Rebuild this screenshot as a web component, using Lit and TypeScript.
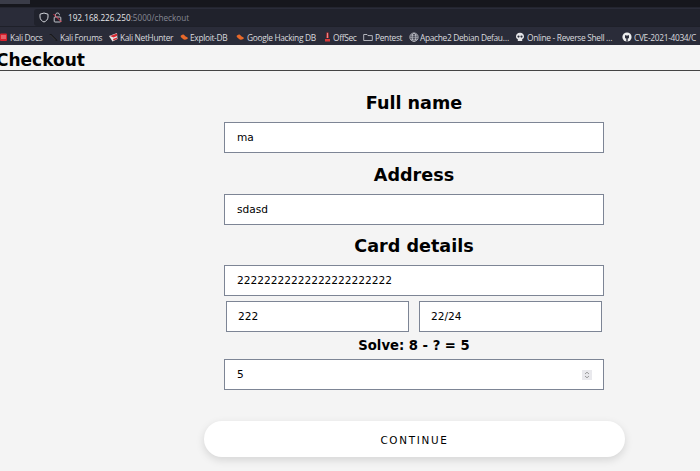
import { LitElement, html, css, svg } from "lit";
import { customElement } from "lit/decorators.js";

const icons: Record<string, unknown> = {
  docs: svg`<rect x="0" y="1.5" width="7" height="7.5" rx="1" fill="#d8202c"/><path d="M1 4h5M1 6h5" stroke="#f4c8c8" stroke-width=".8"/>`,
  forums: svg`<path d="M0 2 L2 2 L8.5 8.5 L7 9 L3 5 Z" fill="#0b0b0d"/><path d="M1 2.5 L7 8.5" stroke="#777" stroke-width=".5"/>`,
  hunter: svg`<path d="M0 4 L8 1 L8.5 7 L3.5 9.5 Z" fill="#e6e6e6"/><path d="M1 4 L8 1.4 L8 4 L4.5 5.4Z" fill="#d62a33"/><path d="M4 7 L8 5.4 L8 7 L4.5 8.6Z" fill="#d62a33"/>`,
  exploit: svg`<path d="M.5 4 C2 2 4 2 5 4 C6 5 7.5 5 8 6 C7 8 4 8 3 7 C2 6 1 5.5 .5 4Z" fill="#e8692a"/>`,
  offsec: svg`<path d="M3.5 0.5 L5.5 0.5 L5.8 6 L3.2 6 Z" fill="#cf2e2e"/><path d="M2 7 H7 V9.5 H2Z" fill="#d83a3a"/><path d="M4.5 1 V6" stroke="#f5c6c6" stroke-width=".6"/>`,
  folder: svg`<path d="M.7 2.5 H4 L5 3.6 H9.3 V8.5 H.7 Z" fill="none" stroke="#d4d6dc" stroke-width=".8"/>`,
  globe: svg`<g fill="none" stroke="#d4d6dc" stroke-width=".7"><circle cx="5" cy="5.2" r="4.2"/><ellipse cx="5" cy="5.2" rx="1.9" ry="4.2"/><path d="M1 5.2H9M1.5 3.2H8.5M1.5 7.2H8.5"/></g>`,
  skull: svg`<path d="M5 .8 C2.2 .8 1 2.6 1 4.6 C1 6 1.8 6.8 2.8 7.2 V9 H7.2 V7.2 C8.2 6.8 9 6 9 4.6 C9 2.6 7.8 .8 5 .8Z" fill="#e4e5e8"/><circle cx="3.5" cy="4.6" r="1.1" fill="#2b2d3a"/><circle cx="6.5" cy="4.6" r="1.1" fill="#2b2d3a"/>`,
  github: svg`<circle cx="5" cy="5" r="4.6" fill="#eceded"/><path d="M3 3 L4 3.6 H6 L7 3 V5.4 C7 6.2 6.3 6.5 5.7 6.6 V9.4 H4.3 V6.6 C3.7 6.5 3 6.2 3 5.4Z" fill="#2b2d3a"/>`,
};

const marks = [
  { label: "Kali Docs", icon: "docs", w: 7, text: 32 },
  { label: "Kali Forums", icon: "forums", w: 8, text: 42 },
  { label: "Kali NetHunter", icon: "hunter", w: 8, text: 53 },
  { label: "Exploit-DB", icon: "exploit", w: 7, text: 39 },
  { label: "Google Hacking DB", icon: "exploit", w: 8, text: 69 },
  { label: "OffSec", icon: "offsec", w: 7, text: 23 },
  { label: "Pentest", icon: "folder", w: 9, text: 27 },
  { label: "Apache2 Debian Defau…", icon: "globe", w: 8, text: 88 },
  { label: "Online - Reverse Shell …", icon: "skull", w: 9, text: 88 },
  { label: "CVE-2021-4034/C", icon: "github", w: 9, text: 62 },
];

@customElement("app-root")
export class AppRoot extends LitElement {
  static styles = css`
    :host { display: block; width: 700px; height: 471px; overflow: hidden; background: #f4f4f4; font-family: "DejaVu Sans", sans-serif; color: #000; }
    .tabs { height: 7px; background: #16171d; }
    .tab { width: 30px; height: 4px; background: #3a3c48; }
    .toolbar { height: 19px; background: #2a2c39; padding: 1px 0 0 34px; box-sizing: border-box; border-top: 1px solid #23252f; }
    .url { height: 17px; width: 666px; background: #20222c; border-radius: 3px 0 0 3px; display: flex; align-items: center; padding-left: 5px; gap: 4px; box-sizing: border-box; font: 8.2px "Open Sans", sans-serif; }
    .url svg { display: block; flex: none; }
    .addr { margin-left: 2px; }
    .host { color: #e6e7ea; }
    .rest { color: #868893; }
    .marks { height: 19px; padding-top: 2px; background: #2a2c39; border-top: 1px solid #1e2029; display: flex; align-items: center; gap: 7px; box-sizing: border-box; white-space: nowrap; font: 8.4px "Open Sans", sans-serif; letter-spacing: -.33px; color: #d9dade; overflow: hidden; }
    .mark { display: flex; align-items: center; gap: 3px; flex: none; }
    .mark svg { display: block; flex: none; overflow: visible; }
    .mark span { display: block; }
    .page { display: flex; flex-direction: column; }
    .title { margin: 0 0 0 -4px; font-size: 17px; line-height: 30px; font-weight: 700; height: 25px; }
    .rule { height: 1px; background: #444; margin: 0; }
    .form { width: 422px; margin: 22px 0 0 203px; display: flex; flex-direction: column; align-items: center; }
    h2 { margin: 0; font-size: 17.6px; line-height: 21px; font-weight: 700; text-align: center; }
    .gap { height: 8px; }
    .between { height: 12px; }
    .between.short { height: 11px; }
    .field { width: 380px; height: 31px; box-sizing: border-box; background: #fff; border: 1px solid #7d8595; display: flex; align-items: center; padding: 0 12px 2px; font-size: 10.6px; color: #000; }
    .row { display: flex; gap: 10px; width: 376px; margin-top: 5px; }
    .row .field { width: 183px; padding-left: 11px; }
    .solve { font-size: 13.2px; font-weight: 700; line-height: 18px; margin: 5px 0 4px; }
    .spin { margin-left: auto; margin-right: -1px; margin-top: 2px; width: 10px; height: 10px; background: #e9e9ed; display: block; }
    button { all: unset; box-sizing: border-box; width: 421px; height: 36px; margin-top: 31px; margin-left: 1px; border-radius: 18px; background: #fff; text-align: center; font-size: 10.4px; letter-spacing: 1.7px; line-height: 38px; color: #000; box-shadow: 0 3px 8px rgba(0,0,0,.13); }
  `;

  render() {
    return html`
      <div class="tabs"><div class="tab"></div></div>
      <div class="toolbar">
        <div class="url">
          <svg width="10" height="11" viewBox="0 0 10 11"><path d="M5 1 L9 2.2 V5 C9 7.5 7 9.3 5 10 C3 9.3 1 7.5 1 5 V2.2 Z" fill="none" stroke="#d4d6dc" stroke-width="1"/></svg>
          <svg width="9" height="11" viewBox="0 0 9 11"><path d="M2.5 5 V3.2 C2.5 1.8 3.4 1 4.5 1 C5.6 1 6.5 1.8 6.5 3.2" fill="none" stroke="#d4d6dc" stroke-width=".9"/><rect x="1.2" y="5" width="6.6" height="5" rx=".8" fill="none" stroke="#d4d6dc" stroke-width=".9"/><path d="M.5 2 L8.5 10" stroke="#e2344a" stroke-width="1"/></svg>
          <span class="addr"><span class="host">192.168.226.250</span><span class="rest">:5000/checkout</span></span>
        </div>
      </div>
      <div class="marks">
        ${marks.map((m) => html`<div class="mark">
          <svg width=${m.w} height="10" viewBox="0 0 ${m.w} 10">${icons[m.icon]}</svg>
          <span style="width:${m.text}px">${m.label}</span>
        </div>`)}
      </div>
      <div class="page">
        <h1 class="title">Checkout</h1>
        <div class="rule"></div>
        <div class="form">
          <h2>Full name</h2>
          <div class="gap"></div>
          <div class="field">ma</div>
          <div class="between"></div>
          <h2>Address</h2>
          <div class="gap"></div>
          <div class="field">sdasd</div>
          <div class="between short"></div>
          <h2>Card details</h2>
          <div class="gap"></div>
          <div class="field">22222222222222222222222</div>
          <div class="row">
            <div class="field">222</div>
            <div class="field">22/24</div>
          </div>
          <div class="solve">Solve: 8 - ? = 5</div>
          <div class="field">5
            <svg class="spin" viewBox="0 0 10 10"><path d="M3 4 L5 2.2 L7 4M3 6 L5 7.8 L7 6" fill="none" stroke="#777" stroke-width=".7"/></svg>
          </div>
          <button>CONTINUE</button>
        </div>
      </div>
    `;
  }
}
